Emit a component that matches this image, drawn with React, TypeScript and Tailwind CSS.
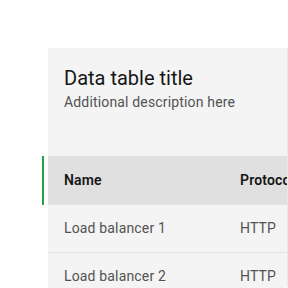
const rows = [
  { name: "Load balancer 1", protocol: "HTTP" },
  { name: "Load balancer 2", protocol: "HTTP" },
];

export default function App() {
  return (
    <div className="h-[288px] w-[288px] overflow-hidden bg-white pl-[48px] pt-[48px] font-['Roboto',sans-serif]">
      <div className="relative h-[239px] w-[240px] border-r border-[#e8e8e8]">
        <div className="h-[108px] overflow-hidden bg-[#f4f4f4] pl-[16px] pt-[16px]">
          <h4 className="whitespace-nowrap text-[20px] leading-[28px] text-[#161616]">Data table title</h4>
          <p className="whitespace-nowrap text-[14px] leading-[20px] tracking-[0.16px] text-[#525252]">
            Additional description here
          </p>
        </div>
        <div className="absolute left-[-6px] top-[108px] h-[49px] w-[2px] bg-[#24a148]" />
        <div className="overflow-hidden">
          <div className="flex h-[49px] w-[320px] items-center bg-[#e0e0e0] text-[14px] font-semibold tracking-[0.16px] text-[#161616]">
            <div className="w-[176px] shrink-0 px-[16px]">Name</div>
            <div className="w-[144px] shrink-0 px-[16px]">Protocol</div>
          </div>
          {rows.map((r) => (
            <div
              key={r.name}
              className="flex h-[48px] w-[320px] items-center border-b border-[#e0e0e0] bg-[#f4f4f4] text-[14px] tracking-[0.16px] text-[#525252]"
            >
              <div className="w-[176px] shrink-0 px-[16px]">{r.name}</div>
              <div className="w-[144px] shrink-0 px-[16px]">{r.protocol}</div>
            </div>
          ))}
        </div>
      </div>
    </div>
  );
}
